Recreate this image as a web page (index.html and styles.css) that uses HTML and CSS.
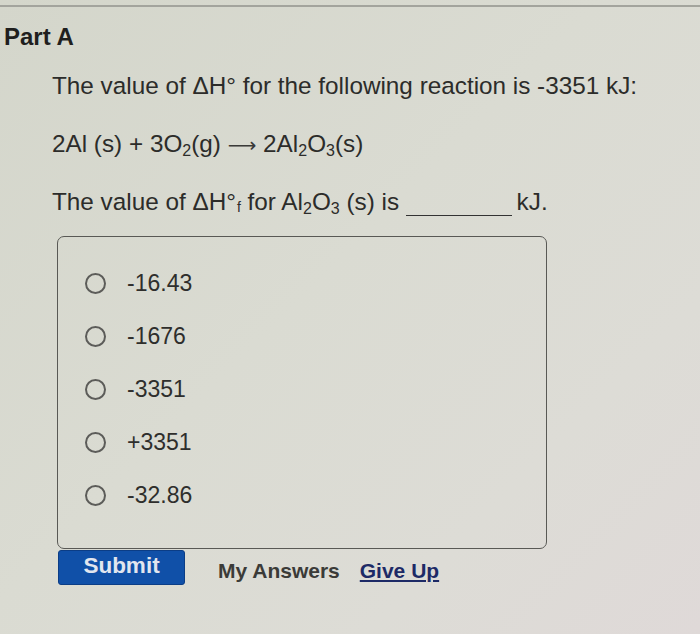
FILE: index.html
```html
<!DOCTYPE html>
<html>
<head>
<meta charset="utf-8">
<link rel="stylesheet" href="styles.css">
</head>
<body>
<div class="page">
  <div class="rule"></div>
  <h2 class="part">Part A</h2>
  <div class="question">
    <p class="line l1">The value of ΔH° for the following reaction is -3351 kJ:</p>
    <p class="line l2">2Al (s) + 3O<sub>2</sub>(g) <span class="arrow">⟶</span> 2Al<sub>2</sub>O<sub>3</sub>(s)</p>
    <p class="line l3">The value of ΔH°<sub class="f">f</sub> for Al<sub>2</sub>O<sub>3</sub> (s) is <span class="blank"></span> kJ.</p>
  </div>
  <div class="box">
    <label class="opt"><span class="radio"></span><span class="val">-16.43</span></label>
    <label class="opt"><span class="radio"></span><span class="val">-1676</span></label>
    <label class="opt"><span class="radio"></span><span class="val">-3351</span></label>
    <label class="opt"><span class="radio"></span><span class="val">+3351</span></label>
    <label class="opt"><span class="radio"></span><span class="val">-32.86</span></label>
  </div>
  <div class="actions">
    <button class="submit">Submit</button>
    <span class="link answers">My Answers</span>
    <span class="link giveup">Give Up</span>
  </div>
</div>
</body>
</html>
```

FILE: styles.css
```css
html, body {
  margin: 0;
  padding: 0;
}
body {
  width: 700px;
  height: 634px;
  overflow: hidden;
  background: linear-gradient(135deg, #d4d6cb 0%, #dadbd2 45%, #dddcd6 75%, #dfd9d8 100%);
  font-family: "Liberation Sans", Arial, sans-serif;
  color: #2c2c2a;
}
.page {
  display: flex;
  flex-direction: column;
}
.rule {
  height: 2px;
  margin-top: 5px;
  background: #a3a49d;
}
.part {
  margin: 15px 0 0 4px;
  font-size: 24px;
  line-height: 30px;
  font-weight: bold;
  color: #1f1f1e;
}
.question {
  padding-left: 52px;
  display: flex;
  flex-direction: column;
}
.line {
  margin: 0;
  font-size: 24.3px;
  line-height: 30px;
  white-space: nowrap;
}
.l1 { margin-top: 19px; }
.l2 { margin-top: 28px; }
.l3 { margin-top: 27px; }
sub {
  font-size: 16px;
  line-height: 0;
  vertical-align: -4px;
}
sub.f {
  font-size: 14px;
  vertical-align: -2px;
  margin-left: 1px;
}
.arrow {
  font-family: "DejaVu Sans", sans-serif;
  font-size: 20px;
  color: #3a3a38;
}
.blank {
  display: inline-block;
  width: 106px;
  height: 1px;
  border-bottom: 1.5px solid #333;
  vertical-align: -6px;
  margin-right: -2px;
}
.box {
  margin: 19px 0 0 57px;
  width: 490px;
  height: 313px;
  border: 1.5px solid #595955;
  border-radius: 7px;
  box-sizing: border-box;
  display: flex;
  flex-direction: column;
  padding-top: 20px;
}
.opt {
  display: flex;
  align-items: center;
  height: 53px;
  padding-left: 27px;
}
.radio {
  width: 17px;
  height: 17px;
  border: 2px solid #5c5c59;
  border-radius: 50%;
  flex: none;
}
.val {
  margin-left: 21px;
  font-size: 23px;
  color: #2e2e2c;
}
.actions {
  display: flex;
  align-items: center;
  margin: 1px 0 0 58px;
}
.submit {
  width: 127px;
  height: 35px;
  border: 1px solid #0b3d86;
  border-radius: 3px;
  background: #1050a8;
  color: #e2e6ef;
  font-family: "Liberation Sans", Arial, sans-serif;
  font-weight: bold;
  font-size: 22.5px;
  padding: 0 0 3px 0;
  text-align: center;
}
.link {
  font-weight: bold;
  font-size: 21px;
  padding-top: 7px;
}
.answers {
  margin-left: 33px;
  color: #3b3b38;
}
.giveup {
  margin-left: 20px;
  color: #1d2a66;
  text-decoration: underline;
  text-underline-offset: 2px;
}
```
